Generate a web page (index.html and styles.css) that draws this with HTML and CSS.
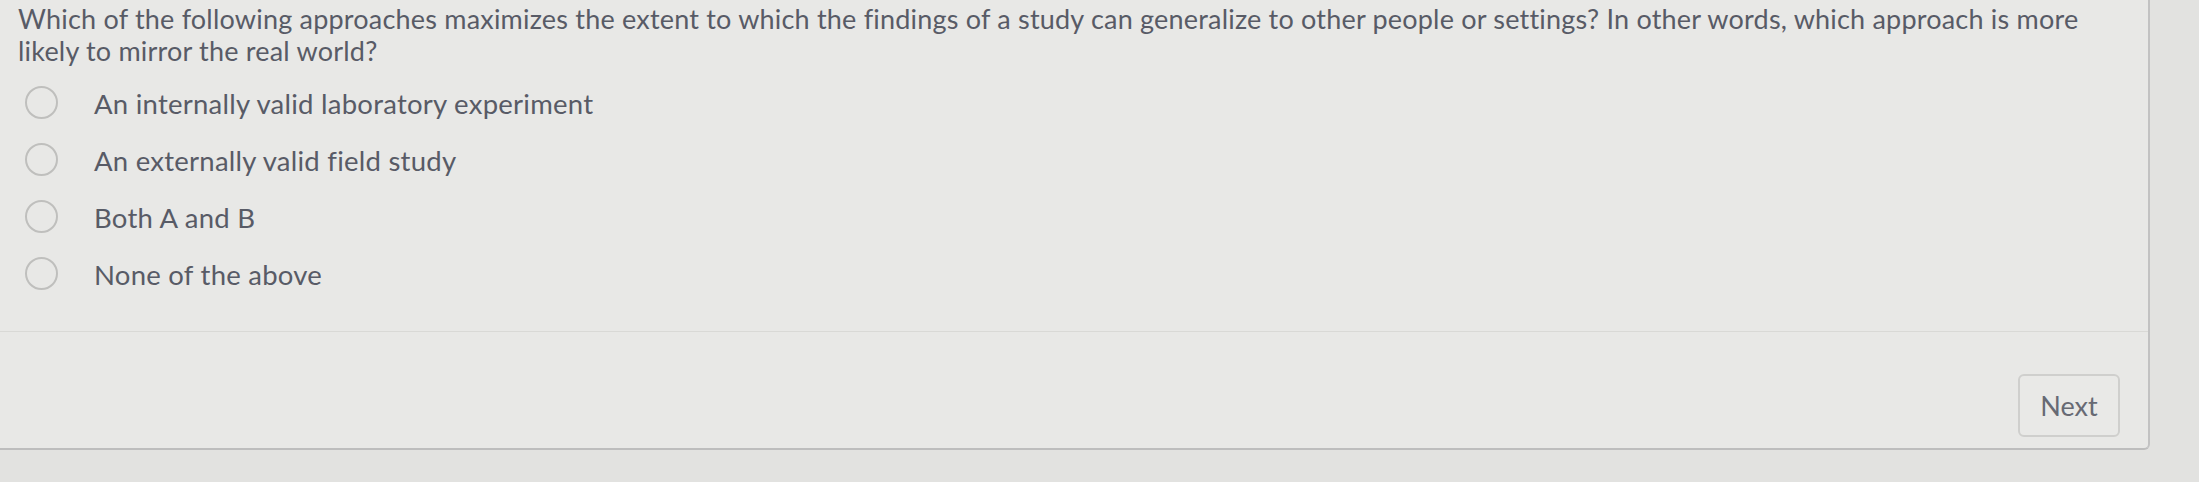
FILE: index.html
```html
<!DOCTYPE html>
<html lang="en">
<head>
<meta charset="utf-8">
<title>Question</title>
<link rel="stylesheet" href="styles.css">
</head>
<body>
<div class="panel">
  <div class="question-area">
    <p class="question">Which of the following approaches maximizes the extent to which the findings of a study can generalize to other people or settings? In other words, which approach is more likely to mirror the real world?</p>
    <ul class="options">
      <li class="option"><span class="radio"></span><span class="label">An internally valid laboratory experiment</span></li>
      <li class="option"><span class="radio"></span><span class="label">An externally valid field study</span></li>
      <li class="option"><span class="radio"></span><span class="label">Both A and B</span></li>
      <li class="option"><span class="radio"></span><span class="label">None of the above</span></li>
    </ul>
  </div>
  <div class="footer">
    <button class="next">Next</button>
  </div>
</div>
</body>
</html>
```
FILE: styles.css
```css
html, body {
  margin: 0;
  padding: 0;
}
body {
  background: #e2e2e0;
  font-family: Lato, "Open Sans", sans-serif;
  color: #585b66;
  width: 2199px;
  height: 482px;
  overflow: hidden;
}
.panel {
  box-sizing: border-box;
  width: 2150px;
  height: 450px;
  background: #e8e8e6;
  border-right: 2px solid #c2c2c2;
  border-bottom: 2px solid #bdbdbd;
  border-bottom-right-radius: 6px;
  display: flex;
  flex-direction: column;
}
.question-area {
  box-sizing: border-box;
  height: 332px;
  border-bottom: 1px solid #d9d9d6;
}
.question {
  margin: 0;
  padding: 3px 0 0 18px;
  width: 2100px;
  font-size: 27px;
  line-height: 32px;
  letter-spacing: 0.2px;
}
.options {
  list-style: none;
  margin: 0;
  padding: 7px 0 0 25px;
}
.option {
  display: flex;
  align-items: center;
  height: 57px;
}
.radio {
  box-sizing: border-box;
  width: 33px;
  height: 33px;
  border: 2px solid #bfbfbd;
  border-radius: 50%;
  flex: none;
}
.label {
  margin-left: 36px;
  font-size: 27.5px;
  line-height: 32px;
  letter-spacing: 0.25px;
  padding-top: 3px;
}
.footer {
  flex: 1;
  display: flex;
  justify-content: flex-end;
  align-items: flex-start;
  padding: 42px 28px 0 0;
}
.next {
  box-sizing: border-box;
  width: 102px;
  height: 63px;
  background: #e9e9e7;
  border: 2px solid #cfcfcd;
  border-radius: 6px;
  font-family: Lato, "Open Sans", sans-serif;
  font-size: 27px;
  color: #676a74;
  padding: 0;
}
```
